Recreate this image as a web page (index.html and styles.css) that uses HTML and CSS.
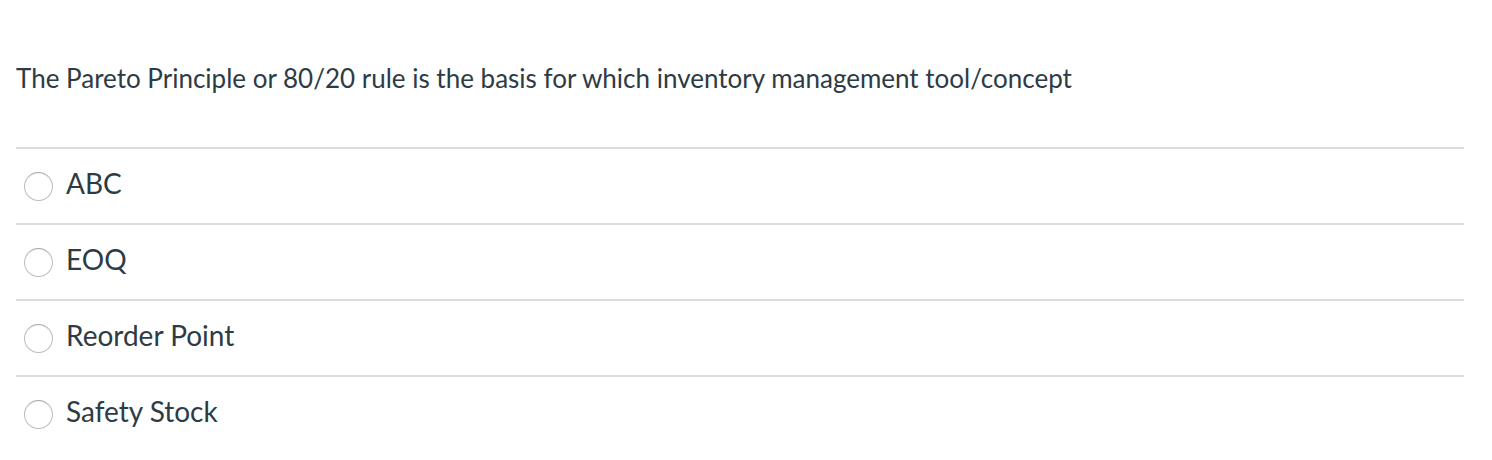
FILE: index.html
```html
<!DOCTYPE html>
<html>
<head>
<meta charset="utf-8">
<link rel="stylesheet" href="styles.css">
</head>
<body>
<div class="quiz">
  <div class="question">The Pareto Principle or 80/20 rule is the basis for which inventory management tool/concept</div>
  <div class="answers">
    <label class="answer"><span class="radio"></span><span class="label">ABC</span></label>
    <label class="answer"><span class="radio"></span><span class="label">EOQ</span></label>
    <label class="answer"><span class="radio"></span><span class="label">Reorder Point</span></label>
    <label class="answer"><span class="radio"></span><span class="label">Safety Stock</span></label>
  </div>
</div>
</body>
</html>
```
FILE: styles.css
```css
html, body {
  margin: 0;
  padding: 0;
  background: #fff;
}
body {
  font-family: Lato, "Liberation Sans", sans-serif;
  color: #2d3b45;
}
.quiz {
  width: 1448px;
  padding: 0 0 0 16px;
}
.question {
  font-size: 26px;
  line-height: 36px;
  padding-top: 60px;
  height: 87px;
}
.answers {
  display: flex;
  flex-direction: column;
}
.answer {
  display: flex;
  align-items: center;
  height: 74px;
  border-top: 2px solid #dcdcdc;
}
.radio {
  flex: none;
  width: 29px;
  height: 29px;
  border-radius: 50%;
  border: 1.5px solid #bdbdbd;
  border-top-color: #a9a9a9;
  box-sizing: border-box;
  margin-left: 8px;
  margin-right: 13px;
  background: #fff;
  box-shadow: inset 0 1px 1px rgba(0,0,0,0.05);
}
.label {
  font-size: 28px;
  line-height: 34px;
  margin-bottom: 6px;
}
```
